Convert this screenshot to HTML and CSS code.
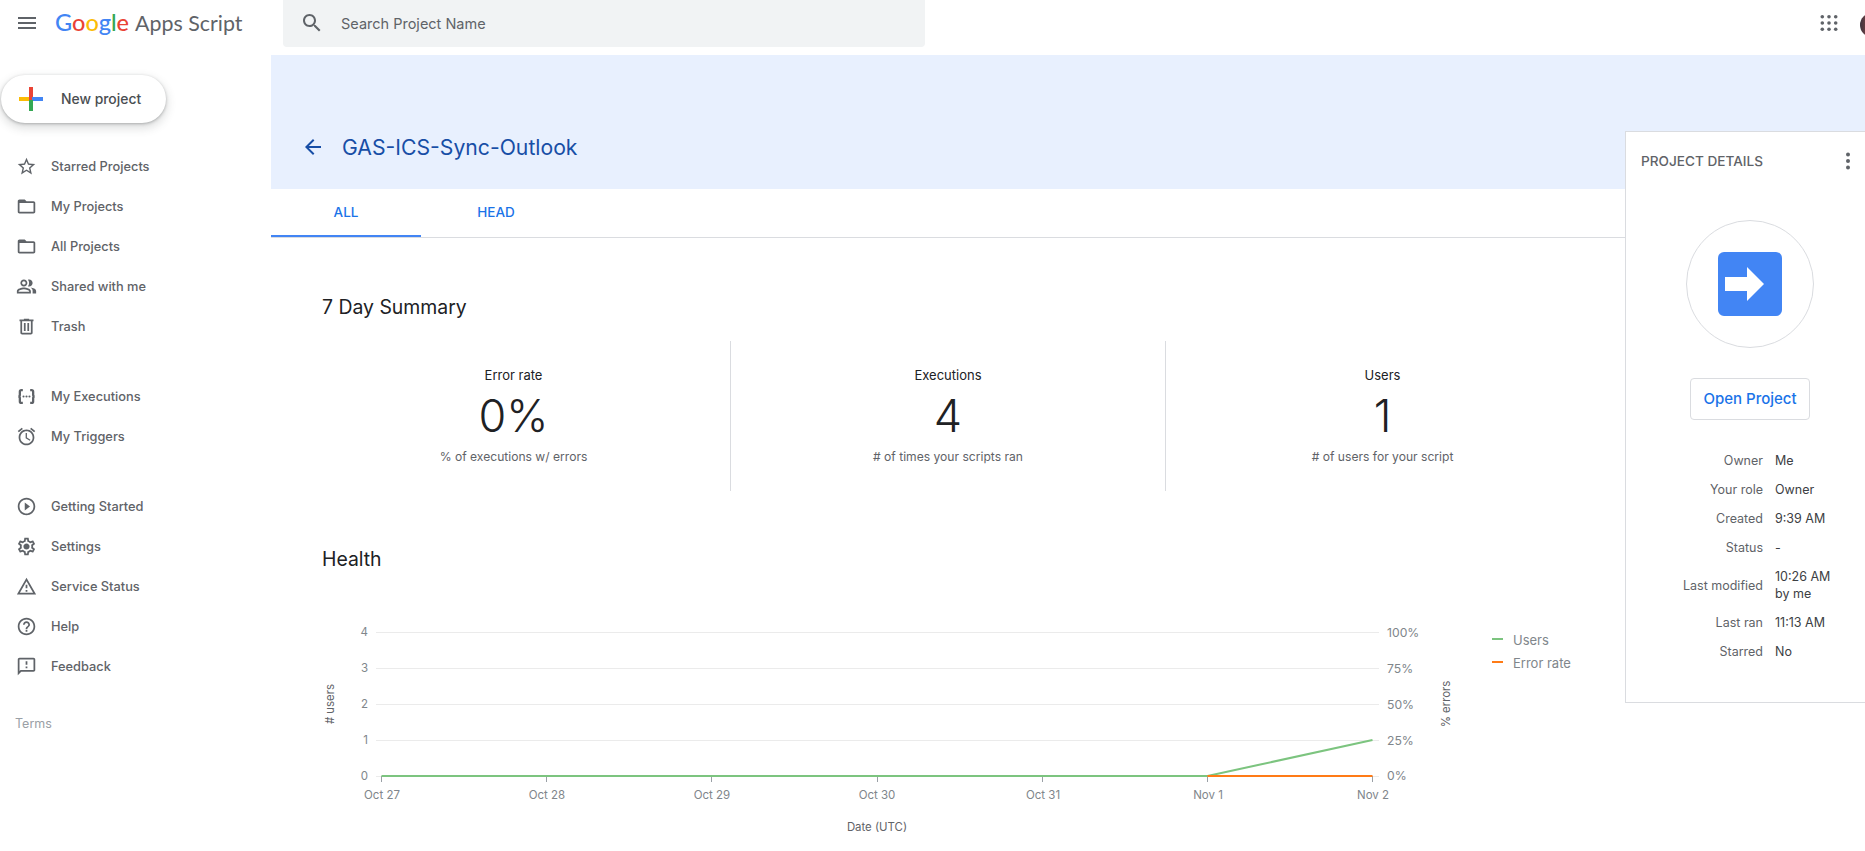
FILE: index.html
```html
<!DOCTYPE html>
<html lang="en">
<head>
<meta charset="utf-8">
<title>Google Apps Script</title>
<link rel="stylesheet" href="styles.css">
</head>
<body>
<header class="topbar">
  <div class="brand">
    <svg class="icon-menu" viewBox="0 0 24 24"><path d="M3 18h18v-2H3v2zm0-5h18v-2H3v2zm0-7v2h18V6H3z"/></svg>
    <div class="logo"><span class="g-blue">G</span><span class="g-red">o</span><span class="g-yellow">o</span><span class="g-blue">g</span><span class="g-green">l</span><span class="g-red">e</span><span class="logo-name">Apps Script</span></div>
  </div>
  <div class="search">
    <svg class="icon-search" viewBox="0 0 24 24"><path d="M15.5 14h-.79l-.28-.27C15.41 12.59 16 11.11 16 9.5 16 5.91 13.09 3 9.5 3S3 5.91 3 9.5 5.91 16 9.5 16c1.61 0 3.09-.59 4.23-1.57l.27.28v.79l5 4.99L20.49 19l-4.99-5zm-6 0C7.01 14 5 11.99 5 9.5S7.01 5 9.5 5 14 7.01 14 9.5 11.99 14 9.5 14z"/></svg>
    <span class="search-text">Search Project Name</span>
  </div>
  <svg class="icon-apps" viewBox="0 0 24 24"><circle cx="5.3" cy="5.7" r="1.8"/><circle cx="12" cy="5.7" r="1.8"/><circle cx="18.7" cy="5.7" r="1.8"/><circle cx="5.3" cy="12" r="1.8"/><circle cx="12" cy="12" r="1.8"/><circle cx="18.7" cy="12" r="1.8"/><circle cx="5.3" cy="18.2" r="1.8"/><circle cx="12" cy="18.2" r="1.8"/><circle cx="18.7" cy="18.2" r="1.8"/></svg>
  <div class="avatar"></div>
</header>
<div class="layout">
  <aside class="sidebar">
    <button class="new-project">
      <svg class="icon-plus" viewBox="0 0 24 24"><rect x="0" y="10" width="12" height="4" fill="#fbbc05"/><rect x="10" y="0" width="4" height="13" fill="#ea4335"/><rect x="13" y="10" width="11" height="4" fill="#4285f4"/><rect x="10" y="13" width="4" height="11" fill="#34a853"/></svg>
      <span>New project</span>
    </button>
    <nav class="nav-group nav-first">
      <a class="nav-item"><svg viewBox="0 0 24 24"><path d="M22 9.24l-7.19-.62L12 2 9.19 8.63 2 9.24l5.46 4.73L5.82 21 12 17.27 18.18 21l-1.63-7.03L22 9.24zM12 15.4l-3.76 2.27 1-4.28-3.32-2.88 4.38-.38L12 6.1l1.71 4.04 4.38.38-3.32 2.88 1 4.28L12 15.4z"/></svg>Starred Projects</a>
      <a class="nav-item"><svg viewBox="0 0 24 24"><path d="M20 6h-8l-2-2H4c-1.1 0-1.99.9-1.99 2L2 18c0 1.1.9 2 2 2h16c1.1 0 2-.9 2-2V8c0-1.1-.9-2-2-2zm0 12H4V8h16v10z"/></svg>My Projects</a>
      <a class="nav-item"><svg viewBox="0 0 24 24"><path d="M20 6h-8l-2-2H4c-1.1 0-1.99.9-1.99 2L2 18c0 1.1.9 2 2 2h16c1.1 0 2-.9 2-2V8c0-1.1-.9-2-2-2zm0 12H4V8h16v10z"/></svg>All Projects</a>
      <a class="nav-item"><svg viewBox="0 0 24 24"><path d="M16.67 13.13C18.04 14.06 19 15.32 19 17v3h4v-3c0-2.18-3.57-3.47-6.33-3.87zM15 12c2.21 0 4-1.79 4-4s-1.79-4-4-4c-.47 0-.91.1-1.33.24C14.5 5.27 15 6.58 15 8s-.5 2.73-1.33 3.76c.42.14.86.24 1.33.24zM9 12c2.21 0 4-1.79 4-4s-1.79-4-4-4-4 1.79-4 4 1.79 4 4 4zm0-6c1.1 0 2 .9 2 2s-.9 2-2 2-2-.9-2-2 .9-2 2-2zM9 13c-2.67 0-8 1.34-8 4v3h16v-3c0-2.66-5.33-4-8-4zm6 5H3v-.99C3.2 16.29 6.3 15 9 15s5.800 1.290 6 2v1z"/></svg>Shared with me</a>
      <a class="nav-item"><svg viewBox="0 0 24 24"><path d="M15 4V3H9v1H4v2h1v13c0 1.1.9 2 2 2h10c1.1 0 2-.9 2-2V6h1V4h-5zm2 15H7V6h10v13zM9 8h2v9H9V8zm4 0h2v9h-2V8z"/></svg>Trash</a>
    </nav>
    <nav class="nav-group">
      <a class="nav-item"><svg viewBox="0 0 24 24"><path class="bracket" d="M7.800 4.600H6.200C5.100 4.600 4.400 5.300 4.400 6.400v3.700c0 1.100-.9 1.900-1.700 1.900.8 0 1.700.8 1.700 1.900v3.700c0 1.100.7 1.800 1.800 1.800h1.600M16.200 4.600h1.600c1.100 0 1.800.7 1.800 1.800v3.700c0 1.100.9 1.900 1.700 1.900-.8 0-1.700.8-1.700 1.900v3.700c0 1.100-.7 1.800-1.800 1.800h-1.600"/><circle cx="8.600" cy="12" r="1.200"/><circle cx="12" cy="12" r="1.200"/><circle cx="15.400" cy="12" r="1.200"/></svg>My Executions</a>
      <a class="nav-item"><svg viewBox="0 0 24 24"><path d="M22 5.720l-4.600-3.860-1.290 1.530 4.600 3.860L22 5.720zM7.880 3.390L6.600 1.860 2 5.710l1.290 1.530 4.590-3.850zM12.500 8H11v6l4.750 2.850.75-1.230-4-2.370V8zM12 4c-4.970 0-9 4.030-9 9s4.030 9 9 9 9-4.030 9-9-4.030-9-9-9zm0 16c-3.870 0-7-3.130-7-7s3.130-7 7-7 7 3.130 7 7-3.130 7-7 7z"/></svg>My Triggers</a>
    </nav>
    <nav class="nav-group">
      <a class="nav-item"><svg viewBox="0 0 24 24"><path d="M10 16.500l6-4.500-6-4.500v9zM12 2C6.480 2 2 6.480 2 12s4.480 10 10 10 10-4.480 10-10S17.520 2 12 2zm0 18c-4.410 0-8-3.590-8-8s3.590-8 8-8 8 3.590 8 8-3.590 8-8 8z"/></svg>Getting Started</a>
      <a class="nav-item"><svg viewBox="0 0 24 24"><path d="M19.430 12.980c.04-.32.07-.64.07-.98s-.03-.66-.07-.98l2.110-1.650c.19-.15.24-.42.12-.64l-2-3.460c-.12-.22-.39-.3-.61-.22l-2.490 1c-.52-.4-1.080-.73-1.690-.98l-.38-2.650C14.460 2.180 14.250 2 14 2h-4c-.25 0-.46.18-.49.42l-.38 2.650c-.61.25-1.170.59-1.690.98l-2.490-1c-.23-.09-.49 0-.61.22l-2 3.460c-.13.22-.07.49.12.64l2.110 1.650c-.04.32-.07.65-.07.98s.03.66.07.98l-2.110 1.650c-.19.15-.24.42-.12.64l2 3.460c.12.22.39.3.61.22l2.490-1c.52.4 1.080.73 1.690.98l.38 2.650c.03.24.24.42.49.42h4c.25 0 .46-.18.49-.42l.38-2.650c.61-.25 1.170-.59 1.690-.98l2.490 1c.23.09.49 0 .61-.22l2-3.460c.12-.22.07-.49-.12-.64l-2.110-1.650zM17.450 11.270c.04.31.05.52.05.73 0 .21-.02.43-.05.73l-.14 1.130.89.7 1.080.84-.7 1.210-1.270-.51-1.040-.42-.9.68c-.43.32-.84.56-1.250.73l-1.060.43-.16 1.130-.2 1.350h-1.400l-.19-1.350-.16-1.130-1.060-.43c-.43-.18-.83-.41-1.230-.71l-.91-.7-1.060.43-1.270.51-.7-1.210 1.080-.84.89-.7-.14-1.130c-.03-.31-.05-.54-.05-.74s.02-.43.05-.73l.14-1.130-.89-.7-1.080-.84.7-1.210 1.270.51 1.040.42.9-.68c.43-.32.84-.56 1.250-.73l1.060-.43.16-1.130.2-1.350h1.390l.19 1.350.16 1.130 1.060.43c.43.18.83.41 1.230.71l.91.7 1.060-.43 1.270-.51.7 1.210-1.070.85-.89.7.14 1.130zM12 8.500c-1.930 0-3.500 1.570-3.500 3.500s1.570 3.500 3.500 3.500 3.500-1.570 3.500-3.500-1.570-3.500-3.500-3.500z"/></svg>Settings</a>
      <a class="nav-item"><svg viewBox="0 0 24 24"><path d="M12 5.990L19.530 19H4.470L12 5.990M12 2L1 21h22L12 2zm1 14h-2v2h2v-2zm0-6h-2v4h2v-4z"/></svg>Service Status</a>
      <a class="nav-item"><svg viewBox="0 0 24 24"><path d="M11 18h2v-2h-2v2zm1-16C6.480 2 2 6.480 2 12s4.480 10 10 10 10-4.480 10-10S17.520 2 12 2zm0 18c-4.410 0-8-3.590-8-8s3.590-8 8-8 8 3.590 8 8-3.590 8-8 8zm0-14c-2.210 0-4 1.790-4 4h2c0-1.100.9-2 2-2s2 .9 2 2c0 2-3 1.750-3 5h2c0-2.250 3-2.500 3-5 0-2.210-1.790-4-4-4z"/></svg>Help</a>
      <a class="nav-item"><svg viewBox="0 0 24 24"><path d="M20 2H4c-1.100 0-1.990.9-1.990 2L2 22l4-4h14c1.100 0 2-.9 2-2V4c0-1.100-.9-2-2-2zm0 14H5.170L4 17.170V4h16v12zm-9-4h2v2h-2zm0-6h2v4h-2z"/></svg>Feedback</a>
    </nav>
    <a class="terms">Terms</a>
  </aside>
  <main class="content">
    <section class="hero">
      <svg class="icon-back" viewBox="0 0 24 24"><path d="M20 11H7.830l5.590-5.590L12 4l-8 8 8 8 1.410-1.410L7.830 13H20v-2z"/></svg>
      <h1 class="project-title">GAS-ICS-Sync-Outlook</h1>
    </section>
    <div class="tabs">
      <a class="tab tab-active">ALL</a>
      <a class="tab">HEAD</a>
    </div>
    <section class="summary">
      <h2 class="section-title">7 Day Summary</h2>
      <div class="stats">
        <div class="stat"><div class="stat-label">Error rate</div><div class="stat-value">0%</div><div class="stat-note">% of executions w/ errors</div></div>
        <div class="stat"><div class="stat-label">Executions</div><div class="stat-value">4</div><div class="stat-note"># of times your scripts ran</div></div>
        <div class="stat"><div class="stat-label">Users</div><div class="stat-value">1</div><div class="stat-note"># of users for your script</div></div>
      </div>
      <h2 class="section-title health-title">Health</h2>
      <svg class="chart" viewBox="271 600 1100 251" preserveAspectRatio="xMinYMin">
        <g class="grid">
          <line x1="376" x2="1379" y1="632.500" y2="632.500"/>
          <line x1="376" x2="1379" y1="668.500" y2="668.500"/>
          <line x1="376" x2="1379" y1="704.500" y2="704.500"/>
          <line x1="376" x2="1379" y1="740.500" y2="740.500"/>
          <line x1="376" x2="1379" y1="776.500" y2="776.500"/>
        </g>
        <g class="ticks">
          <line x1="381.500" x2="381.500" y1="776" y2="782"/>
          <line x1="546.500" x2="546.500" y1="776" y2="782"/>
          <line x1="711.500" x2="711.500" y1="776" y2="782"/>
          <line x1="877.500" x2="877.500" y1="776" y2="782"/>
          <line x1="1042.500" x2="1042.500" y1="776" y2="782"/>
          <line x1="1207.500" x2="1207.500" y1="776" y2="782"/>
          <line x1="1372.500" x2="1372.500" y1="776" y2="782"/>
        </g>
        <polyline class="line-users" points="381.500,776 1207.500,776 1372.500,740"/>
        <line class="line-errors" x1="1207.500" x2="1372.500" y1="776" y2="776"/>
        <g class="axis-left">
          <text x="368" y="636">4</text><text x="368" y="672">3</text><text x="368" y="708">2</text><text x="368" y="744">1</text><text x="368" y="780">0</text>
        </g>
        <g class="axis-right">
          <text x="1387" y="637">100%</text><text x="1387" y="673">75%</text><text x="1387" y="709">50%</text><text x="1387" y="745">25%</text><text x="1387" y="780">0%</text>
        </g>
        <g class="axis-bottom">
          <text x="382" y="799">Oct 27</text><text x="547" y="799">Oct 28</text><text x="712" y="799">Oct 29</text><text x="877" y="799">Oct 30</text><text x="1043" y="799">Oct 31</text><text x="1208" y="799">Nov 1</text><text x="1373" y="799">Nov 2</text>
        </g>
        <text class="axis-title" x="877" y="831">Date (UTC)</text>
        <text class="axis-title" transform="translate(334 704) rotate(-90)"># users</text>
        <text class="axis-title" transform="translate(1450 704) rotate(-90)">% errors</text>
        <line class="line-users" x1="1492" x2="1503" y1="639" y2="639"/>
        <text class="legend" x="1513" y="645">Users</text>
        <line class="line-errors" x1="1492" x2="1503" y1="662" y2="662"/>
        <text class="legend" x="1513" y="668">Error rate</text>
      </svg>
    </section>
    <aside class="details">
      <div class="details-head">
        <span class="details-title">PROJECT DETAILS</span>
        <svg class="icon-more" viewBox="0 0 24 24"><circle cx="12" cy="5.500" r="2"/><circle cx="12" cy="12" r="2"/><circle cx="12" cy="18.500" r="2"/></svg>
      </div>
      <div class="project-logo">
        <svg viewBox="0 0 64 64"><rect width="64" height="64" rx="6" fill="#4285f4"/><path fill="#fff" d="M7 25h22V15l17 17-17 17V39H7z"/></svg>
      </div>
      <a class="open-project">Open Project</a>
      <dl class="meta">
        <dt>Owner</dt><dd>Me</dd>
        <dt>Your role</dt><dd>Owner</dd>
        <dt>Created</dt><dd>9:39 AM</dd>
        <dt>Status</dt><dd>-</dd>
        <dt>Last modified</dt><dd>10:26 AM<br>by me</dd>
        <dt>Last ran</dt><dd>11:13 AM</dd>
        <dt>Starred</dt><dd>No</dd>
      </dl>
    </aside>
  </main>
</div>
</body>
</html>
```
FILE: styles.css
```css
* { box-sizing: border-box; }
html, body { margin: 0; height: 100%; }
body {
  width: 1865px; height: 851px; overflow: hidden; background: #fff;
  font-family: "Inter", "Liberation Sans", sans-serif; color: #202124;
}
h1, h2, dl, dd { margin: 0; }

.topbar { display: flex; align-items: flex-start; height: 55px; }
.brand { display: flex; width: 283px; flex: none; }
.icon-menu { width: 24px; height: 24px; margin: 11px 0 0 15px; fill: #5f6368; flex: none; }
.logo { margin: 7px 0 0 16px; font-family: "Lato", sans-serif; font-size: 23.500px; font-weight: 500; line-height: 30px; white-space: nowrap; }
.g-blue { color: #4285f4; } .g-red { color: #ea4335; } .g-yellow { color: #fbbc05; } .g-green { color: #34a853; }
.logo-name { color: #5f6368; margin-left: 6px; font-size: 21.400px; font-weight: 400; }
.search { display: flex; align-items: center; width: 642px; height: 47px; background: #f1f3f4; border-radius: 0 0 4px 4px; padding: 0 0 1px 17px; flex: none; }
.icon-search { width: 24px; height: 24px; fill: #5f6368; flex: none; }
.search-text { margin-left: 17px; font-size: 14.500px; color: #5f6368; }
.icon-apps { width: 24px; height: 24px; margin: 11px 0 0 auto; fill: #5f6368; flex: none; }
.avatar { width: 24px; height: 24px; margin: 13px -19px 0 19px; flex: none; border-radius: 50%; background: linear-gradient(90deg, #3c3540, #a84a45 60%); }

.layout { display: flex; height: 796px; }
.sidebar { width: 271px; flex: none; display: flex; flex-direction: column; align-items: flex-start; padding-top: 20px; }
.new-project {
  display: flex; align-items: center; gap: 18px; width: 165px; height: 48px; margin-left: 1px; padding: 0 0 0 18px;
  border: 0; border-radius: 24px; background: #fff; color: #4a4e52; font: 500 13.900px "Inter", sans-serif;
  box-shadow: 0 1px 3px rgba(60,64,67,.35), 0 4px 8px 2px rgba(60,64,67,.15);
}
.icon-plus { width: 24px; height: 24px; flex: none; }
.nav-group { display: flex; flex-direction: column; margin-top: 30px; }
.nav-first { margin-top: 23px; }
.nav-item { display: flex; align-items: center; height: 40px; padding-left: 16px; font-size: 12.800px; font-weight: 500; color: #5f6368; white-space: nowrap; }
.nav-item svg { width: 21px; height: 21px; margin-right: 14px; fill: #5f6368; flex: none; }
.nav-item svg .bracket { fill: none; stroke: #5f6368; stroke-width: 2.600; }
.terms { margin: 28px 0 0 15px; font-size: 12.500px; line-height: 20px; color: #9aa0a6; }

.content { position: relative; flex: 1; min-width: 0; }
.hero { display: flex; align-items: center; height: 134px; padding: 78px 0 28px 30px; background: #e8f0fe; }
.icon-back { width: 24px; height: 24px; fill: #174ea6; flex: none; }
.project-title { margin-left: 17px; font-size: 21.200px; line-height: 28px; font-weight: 400; color: #174ea6; }
.tabs { display: flex; height: 49px; border-bottom: 1px solid #dadce0; }
.tab { display: flex; align-items: center; justify-content: center; width: 150px; height: 48px; font-size: 13.500px; font-weight: 500; color: #1a73e8; border-bottom: 2px solid transparent; }
.tab-active { border-bottom-color: #4285f4; }

.summary { padding: 55px 0 0 26px; }
.section-title { margin-left: 25px; font-size: 19.400px; line-height: 28px; font-weight: 400; color: #202124; }
.stats { display: grid; grid-template-columns: 434px 435px 433px; margin-top: 20px; height: 150px; }
.stat { display: flex; flex-direction: column; align-items: center; border-right: 1px solid #dadce0; padding-top: 25px; }
.stat:last-child { border-right: 0; }
.stat-label { font-size: 13px; line-height: 18px; color: #202124; }
.stat-value { margin-top: 5px; font-size: 45px; line-height: 54px; font-weight: 300; color: #202124; }
.stat-note { margin-top: 5px; font-size: 12.100px; line-height: 18px; color: #5f6368; }
.health-title { margin-top: 54px; }
.chart { display: block; width: 1100px; height: 251px; margin: 27px 0 0 -26px; overflow: visible; }
.grid line { stroke: #ebebeb; stroke-width: 1; }
.ticks line { stroke: #9aa0a6; stroke-width: 1; }
.line-users { fill: none; stroke: #7cc47f; stroke-width: 2; }
.line-errors { stroke: #ff7b16; stroke-width: 2; }
.chart text { font-family: "Inter", sans-serif; font-size: 11.500px; fill: #80868b; }
.axis-left text { text-anchor: end; }
.axis-bottom text { text-anchor: middle; }
.chart .axis-right text { font-size: 12.200px; }
.chart .axis-title { font-size: 11.400px; fill: #5f6368; text-anchor: middle; }
.chart .legend { font-size: 13px; fill: #80868b; }

.details {
  position: absolute; top: 76px; right: -10px; width: 250px; height: 572px;
  display: flex; flex-direction: column; align-items: center;
  background: #fff; border: 1px solid #dadce0;
}
.details-head { display: flex; align-items: center; align-self: stretch; height: 56px; padding: 1px 0 0 15px; }
.details-title { font-size: 13.600px; font-weight: 500; color: #5f6368; }
.icon-more { width: 24px; height: 24px; margin-left: 73px; fill: #5f6368; flex: none; }
.project-logo { display: flex; align-items: center; justify-content: center; width: 128px; height: 128px; margin-top: 32px; border: 1px solid #dadce0; border-radius: 50%; }
.project-logo svg { width: 64px; height: 64px; }
.open-project { display: flex; align-items: center; justify-content: center; width: 120px; height: 42px; margin-top: 30px; padding-bottom: 2px; border: 1px solid #dadce0; border-radius: 4px; font-size: 15px; font-weight: 500; color: #1a73e8; }
.meta { display: grid; grid-template-columns: 137px 1fr; column-gap: 12px; row-gap: 12px; align-self: stretch; align-items: center; margin-top: 32px; font-size: 12.500px; line-height: 17px; }
.meta dt { text-align: right; color: #5f6368; }
.meta dd { color: #3c4043; }
```
